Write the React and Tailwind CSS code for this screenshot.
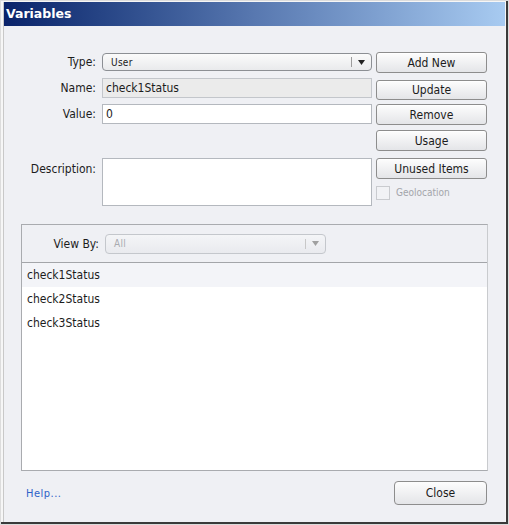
import React from 'react';

const font = { fontFamily: '"DejaVu Sans Condensed", "DejaVu Sans", sans-serif' };

function Btn({ children, className = '' }) {
    return (
        <button
            type="button"
            className={`w-[111px] flex items-center justify-center rounded-[3px] border border-[#8d8d8d] bg-gradient-to-b from-[#fdfdfd] to-[#e4e5e8] text-[12px] text-[#1c1c1c] shadow-[inset_0_1px_0_#ffffff] ${className}`}
        >
            {children}
        </button>
    );
}

function Select({ value, disabled, className = '' }) {
    return (
        <div className={`flex items-center rounded-[4px] border bg-gradient-to-b ${disabled ? 'border-[#c4c7cc] from-[#f4f5f7] to-[#e9eaee]' : 'border-[#8c8f94] from-[#fbfbfb] to-[#e9eaec]'} ${className}`}>
            <span className={`flex-1 pl-[8px] text-[10px] tracking-[0.3px] ${disabled ? 'text-[#a9abb0]' : 'text-[#202020]'}`}>{value}</span>
            <span className={`h-[10px] w-px ${disabled ? 'bg-[#c8c8c8]' : 'bg-[#9c9c9c]'}`} />
            <span className="flex w-[19px] justify-center">
                <svg width="7" height="5" viewBox="0 0 7 5">
                    <path d="M0 0h7L3.5 5z" fill={disabled ? '#a0a0a0' : '#222'} />
                </svg>
            </span>
        </div>
    );
}

export default function App() {
    const rows = ['check1Status', 'check2Status', 'check3Status'];

    return (
        <div className="w-[509px] h-[525px] bg-[#dcdcdc] pt-[1px] pl-[1px]" style={font}>
            <div className="h-[523px] w-[507px] border-r-2 border-b-2 border-[#3a3a3a] bg-[#f6f6f6] pl-[2px] pt-[1px]">
                <div className="flex h-[520px] w-[502px] flex-col border-l border-[#c8c8c8] bg-[#eff0f4]">
                    {/* title bar */}
                    <div className="flex h-[24px] items-center bg-gradient-to-r from-[#0a236a] via-[#5878b0] to-[#a8cbf1] pl-[2px]">
                        <span className="text-[12.5px] font-bold text-white" style={{ fontFamily: '"DejaVu Sans", sans-serif' }}>Variables</span>
                    </div>

                    {/* form */}
                    <div className="flex">
                        <div className="flex w-[368px] flex-col">
                            <div className="mt-[27px] flex h-[18px] items-center">
                                <span className="w-[92px] text-right text-[12px] text-[#1c1c1c]">Type:</span>
                                <Select value="User" className="ml-[6px] h-[18px] w-[270px]" />
                            </div>
                            <div className="mt-[7px] flex h-[20px] items-center">
                                <span className="w-[92px] text-right text-[12px] text-[#1c1c1c]">Name:</span>
                                <div className="ml-[6px] flex h-[20px] w-[270px] items-center border border-[#c3c6cb] bg-[#ebebeb] pl-[3px] text-[12px] text-[#1c1c1c]">check1Status</div>
                            </div>
                            <div className="mt-[6px] flex h-[20px] items-center">
                                <span className="w-[92px] text-right text-[12px] text-[#1c1c1c]">Value:</span>
                                <div className="ml-[6px] flex h-[20px] w-[270px] items-center border border-[#b4b8be] bg-white pl-[3px] text-[12px] text-[#1c1c1c]">0</div>
                            </div>
                            <div className="mt-[34px] flex h-[48px] items-start">
                                <span className="mt-[2px] w-[92px] text-right text-[12px] text-[#1c1c1c]">Description:</span>
                                <div className="ml-[6px] h-[48px] w-[270px] border border-[#b4b8be] bg-white" />
                            </div>
                        </div>
                        <div className="ml-[4px] flex flex-col">
                            <Btn className="mt-[26px] h-[21px]">Add New</Btn>
                            <Btn className="mt-[7px] h-[20px]">Update</Btn>
                            <Btn className="mt-[4px] h-[21px]">Remove</Btn>
                            <Btn className="mt-[5px] h-[21px]">Usage</Btn>
                            <Btn className="mt-[7px] h-[21px]">Unused Items</Btn>
                            <div className="mt-[6px] flex items-center">
                                <span className="h-[14px] w-[14px] border border-[#c9cbcf] bg-[#f1f2f5]" />
                                <span className="ml-[6px] text-[10px] text-[#a3a5aa]">Geolocation</span>
                            </div>
                        </div>
                    </div>

                    {/* list group */}
                    <div className="ml-[17px] mt-[18px] flex h-[247px] w-[467px] flex-col border border-[#a9abaf] border-r-[#c9cbce]">
                        <div className="flex h-[38px] items-center border-b border-[#a3a5a9] bg-[#eff0f4]">
                            <span className="w-[77px] text-right text-[12px] text-[#1c1c1c]">View By:</span>
                            <Select value="All" disabled className="ml-[6px] h-[20px] w-[221px]" />
                        </div>
                        <div className="flex-1 bg-white">
                            {rows.map((r, i) => (
                                <div key={r} className={`flex h-[24px] items-center pl-[5px] text-[12px] text-[#1c1c1c] ${i === 0 ? 'bg-[#f3f4f8]' : ''}`}>
                                    {r}
                                </div>
                            ))}
                        </div>
                    </div>

                    {/* footer */}
                    <div className="mt-[10px] flex items-center">
                        <span className="ml-[22px] mt-[2px] text-[11px] text-[#2e62c8] tracking-[0.5px]">Help...</span>
                        <button
                            type="button"
                            className="ml-auto mr-[18px] h-[24px] w-[93px] rounded-[4px] border border-[#8d8d8d] bg-gradient-to-b from-[#fdfdfd] to-[#e4e5e8] text-[12px] text-[#1c1c1c]"
                        >
                            Close
                        </button>
                    </div>
                </div>
            </div>
        </div>
    );
}
